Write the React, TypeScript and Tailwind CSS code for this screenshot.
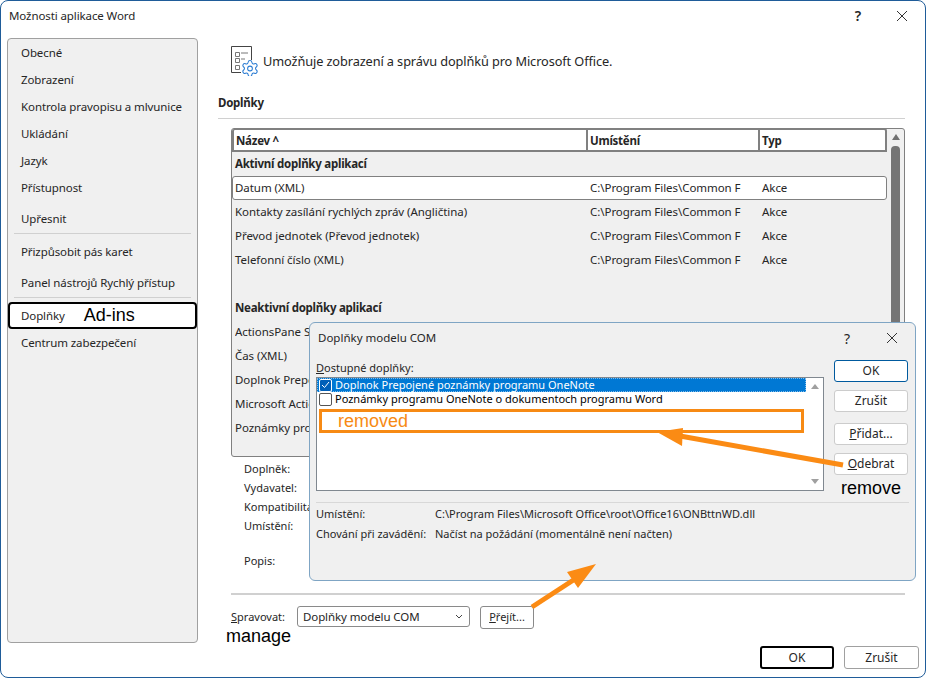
import { Settings } from "lucide-react";
import type { ReactNode } from "react";

const navTop = ["Obecné", "Zobrazení", "Kontrola pravopisu a mlvunice", "Ukládání", "Jazyk", "Přístupnost"];

function NavItem({ label }: { label: string }) {
  return <div className="h-[27px] pl-[13px] leading-[25px]">{label}</div>;
}

function Row({ name, place, type, selected }: { name: string; place?: string; type?: string; selected?: boolean }) {
  return (
    <div className={`flex h-[24px] items-center border tracking-[-0.05px] ${selected ? "rounded-[3px] border-[#808080] bg-white" : "border-transparent"}`}>
      <div className="w-[355px] whitespace-nowrap pl-[2px]">{name}</div>
      <div className="w-[172px] whitespace-nowrap pl-[2px]">{place}</div>
      <div className="pl-[2px]">{type}</div>
    </div>
  );
}

// rows behind the COM dialog, cut where the dialog starts
function HiddenRow({ name }: { name: string }) {
  return (
    <div className="flex h-[24px] items-center border border-transparent pl-[2px] tracking-[-0.05px]">
      <div className="w-[74px] overflow-hidden whitespace-nowrap">{name}</div>
    </div>
  );
}

function ColHead({ w, children }: { w: string; children: ReactNode }) {
  return <div className={`${w} flex items-center border-r-2 border-[#808080] pl-[2px] pt-[2px]`}>{children}</div>;
}

function DialogButton({ children, main, className }: { children: ReactNode; main?: boolean; className?: string }) {
  return (
    <div className={`flex h-[22px] w-[74px] items-center justify-center rounded-[3px] border bg-white text-[12px] tracking-normal ${main ? "border-[#005a9e]" : "border-[#cccccc]"} ${className ?? ""}`}>
      {children}
    </div>
  );
}

function CloseIcon() {
  return (
    <svg width="12" height="12" viewBox="0 0 12 12" stroke="#333">
      <path d="M1 1l10 10M11 1L1 11" />
    </svg>
  );
}

function AddinsIcon() {
  return (
    <svg width="32" height="30" viewBox="0 0 32 30" fill="none" className="shrink-0">
      <path d="M10 26.5H.5V.5H20.5V14" stroke="#444" />
      <path d="M4.5 6.5h4v4h-4zM4.5 12.5h4v4h-4zM4.5 19.5h4v4h-4z" stroke="#777" />
      <path d="M10 7h7M10 13h4" stroke="#777" />
      <Settings x={9.5} y={13} size={19} color="#2b7cd3" strokeWidth={1.3} fill="white" />
    </svg>
  );
}

export default function App() {
  return (
    <div className="relative h-[678px] w-[926px] overflow-hidden bg-white font-['Noto_Sans',sans-serif] text-[11.5px] tracking-[-0.1px] text-[#262626]">
      <div className="flex h-full flex-col rounded-[8px] border border-[#1f5c99]">
        <div className="flex h-[29px] shrink-0 items-center pl-[8px] pr-[17px]">
          <span className="flex-1">Možnosti aplikace Word</span>
          <span className="mr-[35px] text-[14px] font-semibold">?</span>
          <CloseIcon />
        </div>
        <div className="flex flex-1 pl-[6px] pt-[8px]">
          <div className="h-[605px] w-[191px] shrink-0 rounded-[4px] border border-[#a0a0a0] bg-[#f0f0f0] pt-[1px]">
            {navTop.map((l) => <NavItem key={l} label={l} />)}
            <div className="mt-[4px]"><NavItem label="Upřesnit" /></div>
            <div className="mx-[6px] mb-[5px] border-t border-[#d0d0d0]" />
            <NavItem label="Přizpůsobit pás karet" />
            <div className="mt-[4px]"><NavItem label="Panel nástrojů Rychlý přístup" /></div>
            <div className="mx-[6px] border-t border-[#d0d0d0]" />
            <div className="mt-[4px] flex h-[27px] items-center rounded-[4px] border-2 border-black bg-white pl-[11px]">
              <span>Doplňky</span>
              <span className="ml-[19px] font-['Liberation_Sans',sans-serif] text-[18px] tracking-normal text-black">Ad-ins</span>
            </div>
            <div className="mt-[1px]"><NavItem label="Centrum zabezpečení" /></div>
          </div>

          <div className="min-w-0 flex-1 px-[20px]">
            <div className="ml-[13px] mt-[8px] flex h-[30px] items-center">
              <AddinsIcon />
              <span className="pt-[2px] text-[12.75px]">Umožňuje zobrazení a správu doplňků pro Microsoft Office.</span>
            </div>
            <div className="mt-[17px] h-[20px] font-bold leading-[20px] tracking-[-0.25px]">Doplňky</div>
            <div className="mt-[5px] border-t border-[#d0d0d0]" />

            <div className="ml-[13px] mt-[9px] flex h-[329px] overflow-hidden rounded-[3px] border border-[#808080] bg-[#f0f0f0]">
              <div className="w-[655px] shrink-0">
                <div className="-mt-px flex h-[24px] rounded-t-[3px] border-2 border-[#808080] bg-white font-bold tracking-[-0.25px]">
                  <ColHead w="w-[354px]">Název ^</ColHead>
                  <ColHead w="w-[172px]">Umístění</ColHead>
                  <div className="flex items-center pl-[2px] pt-[2px]">Typ</div>
                </div>
                <div className="flex h-[24px] items-center pl-[3px] font-bold tracking-[-0.25px]">Aktivní doplňky aplikací</div>
                <Row selected name="Datum (XML)" place="C:\Program Files\Common F" type="Akce" />
                <Row name="Kontakty zasílání rychlých zpráv (Angličtina)" place="C:\Program Files\Common F" type="Akce" />
                <Row name="Převod jednotek (Převod jednotek)" place="C:\Program Files\Common F" type="Akce" />
                <Row name="Telefonní číslo (XML)" place="C:\Program Files\Common F" type="Akce" />
                <div className="h-[24px]" />
                <div className="flex h-[24px] items-center pl-[3px] font-bold tracking-[-0.25px]">Neaktivní doplňky aplikací</div>
                <HiddenRow name="ActionsPane Schema" />
                <HiddenRow name="Čas (XML)" />
                <HiddenRow name="Doplnok Prepojené" />
                <HiddenRow name="Microsoft Actions" />
                <HiddenRow name="Poznámky programu" />
              </div>
              <div className="flex flex-1 flex-col items-center pt-[5px]">
                <div className="h-0 w-0 border-x-[4px] border-b-[6px] border-x-transparent border-b-[#707070]" />
                <div className="mt-[6px] h-[180px] w-[9px] shrink-0 rounded-t-[4px] bg-[#757575]" />
              </div>
            </div>

            <div className="ml-[26px] mt-[2px] flex flex-col text-[11px] leading-[19px] tracking-normal">
              <div className="h-[19px]">Doplněk:</div>
              <div className="h-[19px]">Vydavatel:</div>
              <div className="h-[19px] w-[65px] overflow-hidden whitespace-nowrap">Kompatibilita:</div>
              <div className="h-[35px]">Umístění:</div>
              <div className="h-[19px]">Popis:</div>
            </div>

            <div className="ml-[13px] mt-[23px] border-t-2 border-[#d0d0d0]" />
            <div className="ml-[13px] mt-[11px] flex h-[23px] items-start">
              <span className="w-[66px] pt-[3px] text-[11px] tracking-normal"><span className="underline">S</span>pravovat:</span>
              <div className="flex h-[21px] w-[173px] items-center justify-between rounded-[3px] border border-[#8a8a8a] pl-[5px] pr-[6px]">
                <span>Doplňky modelu COM</span>
                <svg width="8" height="5" viewBox="0 0 8 5" fill="none" stroke="#444"><path d="M1 1l3 3 3-3" /></svg>
              </div>
              <div className="ml-[10px] flex h-[23px] w-[54px] items-center justify-center rounded-[3px] border border-[#8a8a8a] text-[11px] tracking-normal">
                <span><span className="underline">P</span>řejít...</span>
              </div>
            </div>
            <div className="ml-[8px] font-['Liberation_Sans',sans-serif] text-[18px] leading-[14px] tracking-normal text-black">manage</div>

            <div className="-mr-[14px] mt-[3px] flex justify-end gap-[10px] text-[12px] tracking-normal">
              <div className="flex h-[23px] w-[74px] items-center justify-center rounded-[3px] border-2 border-black bg-white">OK</div>
              <div className="flex h-[23px] w-[75px] items-center justify-center rounded-[3px] border border-[#a0a0a0] bg-white">Zrušit</div>
            </div>
          </div>
        </div>
      </div>

      {/* COM add-ins dialog */}
      <div className="absolute left-[309px] top-[322px] flex h-[259px] w-[607px] flex-col rounded-[6px] border border-[#7fa5c4] bg-[#f0f0f0] text-[11px] tracking-normal">
        <div className="flex h-[30px] shrink-0 items-center pl-[8px] pr-[17px] text-[11.5px]">
          <span className="flex-1">Doplňky modelu COM</span>
          <span className="mr-[36px] text-[14px]">?</span>
          <CloseIcon />
        </div>
        <div className="flex pl-[6px] pr-[7px]">
          <div className="flex-1">
            <div className="mt-[5px] h-[19px] leading-[19px]"><span className="underline">D</span>ostupné doplňky:</div>
            <div className="flex h-[114px] border border-[#808890] bg-white">
              <div className="flex-1 leading-[14px] text-black">
                <div className="flex h-[14px] items-center bg-[#0078d4] pl-[2px] text-white outline-1 -outline-offset-1 outline-white/50 outline-dotted">
                  <span className="flex h-[13px] w-[13px] items-center justify-center rounded-[2px] border border-white bg-[#005fb8]">
                    <svg width="9" height="8" viewBox="0 0 9 8" fill="none" stroke="#fff"><path d="M1 4l2.5 2.5L8 1" /></svg>
                  </span>
                  <span className="ml-[3px]">Doplnok Prepojené poznámky programu OneNote</span>
                </div>
                <div className="flex h-[14px] items-center pl-[2px]">
                  <span className="h-[13px] w-[13px] rounded-[2px] border border-[#555]" />
                  <span className="ml-[3px]">Poznámky programu OneNote o dokumentoch programu Word</span>
                </div>
              </div>
              <div className="flex w-[17px] flex-col items-center justify-between py-[6px]">
                <div className="h-0 w-0 border-x-[4px] border-b-[5px] border-x-transparent border-b-[#a0a0a0]" />
                <div className="h-0 w-0 border-x-[4px] border-t-[5px] border-x-transparent border-t-[#a0a0a0]" />
              </div>
            </div>
          </div>
          <div className="ml-[10px] flex w-[74px] flex-col pt-[7px]">
            <DialogButton main>OK</DialogButton>
            <DialogButton className="mt-[8px]">Zrušit</DialogButton>
            <DialogButton className="mt-[11px]"><span><span className="underline">P</span>řidat...</span></DialogButton>
            <DialogButton className="mt-[8px]"><span><span className="underline">O</span>debrat</span></DialogButton>
            <div className="mt-[4px] whitespace-nowrap text-center font-['Liberation_Sans',sans-serif] text-[18px] leading-[18px] text-black">remove</div>
          </div>
        </div>
        <div className="mx-[6px] mt-[5px] border-t border-[#d8d8d8]" />
        <div className="mt-[1px] flex h-[20px] items-center whitespace-nowrap pl-[6px]"><span className="w-[119px]">Umístění:</span><span>C:\Program Files\Microsoft Office\root\Office16\ONBttnWD.dll</span></div>
        <div className="flex h-[20px] items-center whitespace-nowrap pl-[6px]"><span className="w-[119px]">Chování při zavádění:</span><span>Načíst na požádání (momentálně není načten)</span></div>
      </div>

      {/* orange annotations */}
      <div className="absolute left-[319px] top-[409px] flex h-[24px] w-[485px] items-center border-[3px] border-[#f78a14] pl-[16px] font-['Liberation_Sans',sans-serif] text-[18px] tracking-normal text-[#f78a14]">removed</div>
      <svg className="pointer-events-none absolute left-0 top-0" width="926" height="678" fill="none">
        <path d="M843 465L680 436" stroke="#fb8b14" strokeWidth="5" />
        <path d="M657 432L683 428L682 446Z" fill="#fb8b14" />
        <path d="M532 607L575 579" stroke="#fb8b14" strokeWidth="5" />
        <path d="M596 564L567 572L578 588Z" fill="#fb8b14" />
      </svg>
    </div>
  );
}
